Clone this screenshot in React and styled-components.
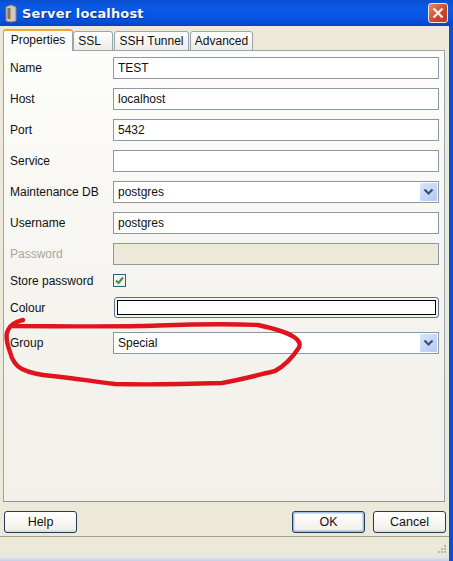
import React from "react";
import styled, { createGlobalStyle } from "styled-components";

const Global = createGlobalStyle`
  html, body { margin: 0; padding: 0; background: #ece9d8; }
  * { box-sizing: border-box; }
`;

const Win = styled.div`
  position: relative;
  width: 453px;
  height: 561px;
  overflow: hidden;
  display: flex;
  flex-direction: column;
  font-family: "Liberation Sans", Arial, sans-serif;
  font-size: 12px;
  color: #111;
  background: linear-gradient(90deg, #ece9d8 440px, #0a4fd8 440px);
`;
const TitleBar = styled.div`
  height: 26px;
  flex: none;
  display: flex;
  align-items: center;
  padding: 0 5px;
  gap: 5px;
  background: linear-gradient(180deg, #0a4fd0 0%, #0a5ae6 30%, #0553e2 70%, #0344c8 100%);
`;
const Title = styled.div`
  flex: 1;
  color: #f4f8ff;
  font-family: "DejaVu Sans", sans-serif;
  font-weight: 700;
  font-size: 13px;
  letter-spacing: 0.15px;
  text-shadow: 1px 1px 0 #0a2f90;
`;
const Close = styled.div`
  width: 20px;
  height: 20px;
  border: 1px solid #f2e6de;
  border-radius: 3px;
  background: linear-gradient(135deg, #e8896a, #c8472a 60%, #b83a20);
  display: flex;
  align-items: center;
  justify-content: center;
`;
const Client = styled.div`
  flex: 1;
  min-height: 0;
  margin-right: 4px;
  display: flex;
  flex-direction: column;
  background: #ece9d8;
  padding-top: 2px;
`;
const Tabs = styled.div`
  display: flex;
  height: 23px;
  align-items: flex-end;
  padding-left: 3px;
  position: relative;
  z-index: 1;
  margin-bottom: -1px;
`;
const Tab = styled.div`
  height: ${(p) => (p.$active ? "22px" : "20px")};
  width: ${(p) => p.$w}px;
  margin-right: ${(p) => p.$mr || 0}px;
  padding: ${(p) => (p.$active ? "0 0 3px 0" : "0")};
  padding-right: ${(p) => p.$pr || 0}px;
  display: flex;
  align-items: center;
  justify-content: center;
  border: 1px solid #98a5ad;
  border-bottom: ${(p) => (p.$active ? "none" : "1px solid #98a5ad")};
  border-top: ${(p) => (p.$active ? "2px solid #eda33a" : "1px solid #98a5ad")};
  border-radius: 3px 3px 0 0;
  background: ${(p) => (p.$active ? "#fbfbf8" : "linear-gradient(180deg, #ffffff, #ecebe5)")};
`;
const Panel = styled.div`
  height: 452px;
  flex: none;
  margin: 0 4px 0 3px;
  background: linear-gradient(180deg, #fdfdfb 0%, #f5f3ee 60%, #f2f0e9 100%);
  border: 1px solid #98a5ad;
  border-bottom-color: #8f9392;
  padding: 5px 5px 0 0;
  display: flex;
  flex-direction: column;
`;
const Row = styled.div`
  display: grid;
  grid-template-columns: 109px 1fr;
  align-items: center;
  height: ${(p) => p.$h || 23}px;
  margin-bottom: ${(p) => p.$mb ?? 8}px;
`;
const Label = styled.div`
  padding-left: 6px;
  color: ${(p) => (p.$disabled ? "#a9a69a" : "#111")};
`;
const Input = styled.div`
  height: 22px;
  border: 1px solid #8a9aa2;
  background: ${(p) => (p.$disabled ? "#ece9d8" : "#fff")};
  padding: 0 4px;
  display: flex;
  align-items: center;
  justify-content: space-between;
`;
const ComboButton = styled.div`
  width: 17px;
  height: 18px;
  margin-right: -3px;
  border-radius: 1px;
  background: linear-gradient(135deg, #dbe5fb, #b4c8f3);
  display: flex;
  align-items: center;
  justify-content: center;
`;
const Check = styled.div`
  width: 13px;
  height: 13px;
  border: 1px solid #2f5f7a;
  background: #f4f4ee;
  display: flex;
  align-items: center;
  justify-content: center;
`;
const ColourBtn = styled.div`
  height: 21px;
  margin-left: 1px;
  border: 1px solid #5d6f85;
  border-radius: 3px;
  background: #f4f4ee;
  padding: 2px;
  display: flex;
`;
const Swatch = styled.div`
  flex: 1;
  background: #fff;
  border: 1px solid #000;
`;
const Footer = styled.div`
  height: 35px;
  flex: none;
  padding: 9px 3px 0 4px;
  display: flex;
  justify-content: space-between;
  border-bottom: 1px solid #a5a294;
  background: #ece9d8;
`;
const Right = styled.div`
  display: flex;
  gap: 8px;
`;
const Btn = styled.div`
  width: 73px;
  height: 22px;
  border: 1px solid #233a55;
  border-radius: 3px;
  background: linear-gradient(180deg, #ffffff, #f3f1ea 85%, #dcd8ca);
  box-shadow: ${(p) => (p.$def ? "inset 0 0 0 1.5px #a4bfe8" : "none")};
  display: flex;
  align-items: center;
  justify-content: center;
  font-size: 12.5px;
`;
const StatusBar = styled.div`
  flex: 1;
  position: relative;
  background: linear-gradient(180deg, #ece9d8 0%, #ece9d8 60%, #e6e6e2 85%, #c3d0ee 100%);
`;
const Grip = styled.svg`
  position: absolute;
  right: 2px;
  top: 7px;
`;
const Scribble = styled.svg`
  position: absolute;
  left: 0;
  top: 0;
  pointer-events: none;
`;
const AppIcon = styled.svg`
  flex: none;
`;

const Chevron = () => (
  <svg width="11" height="8" viewBox="0 0 11 8">
    <path d="M1.5 1.5 L5.5 5.5 L9.5 1.5" fill="none" stroke="#3c4f78" strokeWidth="2.2" />
  </svg>
);

const Field = ({ label, children, disabled, h, mb }) => (
  <Row $h={h} $mb={mb}>
    <Label $disabled={disabled}>{label}</Label>
    {children}
  </Row>
);

export default function App() {
  return (
    <Win>
      <Global />
      <TitleBar>
        <AppIcon width="12" height="19" viewBox="0 0 12 19">
          <path d="M1 3 L6 1 L11 3 V17 L6 18 L1 17 Z" fill="#cfcabf" stroke="#8c8578" />
          <path d="M4 4 V15" stroke="#8f6f5a" strokeWidth="3" />
        </AppIcon>
        <Title>Server localhost</Title>
        <Close>
          <svg width="14" height="14" viewBox="0 0 14 14">
            <path d="M2.5 2.5 L11.5 11.5 M11.5 2.5 L2.5 11.5" stroke="#f7ece6" strokeWidth="2.4" />
          </svg>
        </Close>
      </TitleBar>
      <Client>
        <Tabs>
          <Tab $active $w={70}>Properties</Tab>
          <Tab $w={40} $mr={1} $pr={7}>SSL</Tab>
          <Tab $w={75} $mr={1}>SSH Tunnel</Tab>
          <Tab $w={63}>Advanced</Tab>
        </Tabs>
        <Panel>
          <Field label="Name"><Input>TEST</Input></Field>
          <Field label="Host"><Input>localhost</Input></Field>
          <Field label="Port"><Input>5432</Input></Field>
          <Field label="Service"><Input /></Field>
          <Field label="Maintenance DB">
            <Input>postgres<ComboButton><Chevron /></ComboButton></Input>
          </Field>
          <Field label="Username"><Input>postgres</Input></Field>
          <Field label="Password" disabled><Input $disabled /></Field>
          <Field label="Store password" h={15}>
            <Check>
              <svg width="11" height="11" viewBox="0 0 11 11">
                <path d="M2 5.5 L4.5 8 L9 2.5" fill="none" stroke="#3f8f4a" strokeWidth="2" />
              </svg>
            </Check>
          </Field>
          <Field label="Colour" mb={12}><ColourBtn><Swatch /></ColourBtn></Field>
          <Field label="Group">
            <Input>Special<ComboButton><Chevron /></ComboButton></Input>
          </Field>
        </Panel>
        <Footer>
          <Btn>Help</Btn>
          <Right>
            <Btn $def>OK</Btn>
            <Btn>Cancel</Btn>
          </Right>
        </Footer>
        <StatusBar>
          <Grip width="12" height="12" viewBox="0 0 12 12">
            <path d="M9 1h2v2H9zM6 4h2v2H6zM9 4h2v2H9zM3 7h2v2H3zM6 7h2v2H6zM9 7h2v2H9z" fill="#b9b6a8" />
          </Grip>
        </StatusBar>
      </Client>
      <Scribble width="453" height="561" viewBox="0 0 453 561">
        <path
          d="M23 320 C15 322 10 325 8 330 C5 336 7 344 10 352 C12 360 16 366 22 369 C30 373 40 375 52 376 C75 378 95 382 115 384 C150 385 190 384 222 383 C240 380 258 375 275 371 C284 366 292 358 298 349 C301 345 300 341 294 337 C285 331 272 328 258 325 C215 323 175 325 140 326 C95 327 50 326 12 326"
          fill="none"
          stroke="#e0141c"
          strokeWidth="4.4"
          strokeLinecap="round"
          strokeLinejoin="round"
        />
      </Scribble>
    </Win>
  );
}
